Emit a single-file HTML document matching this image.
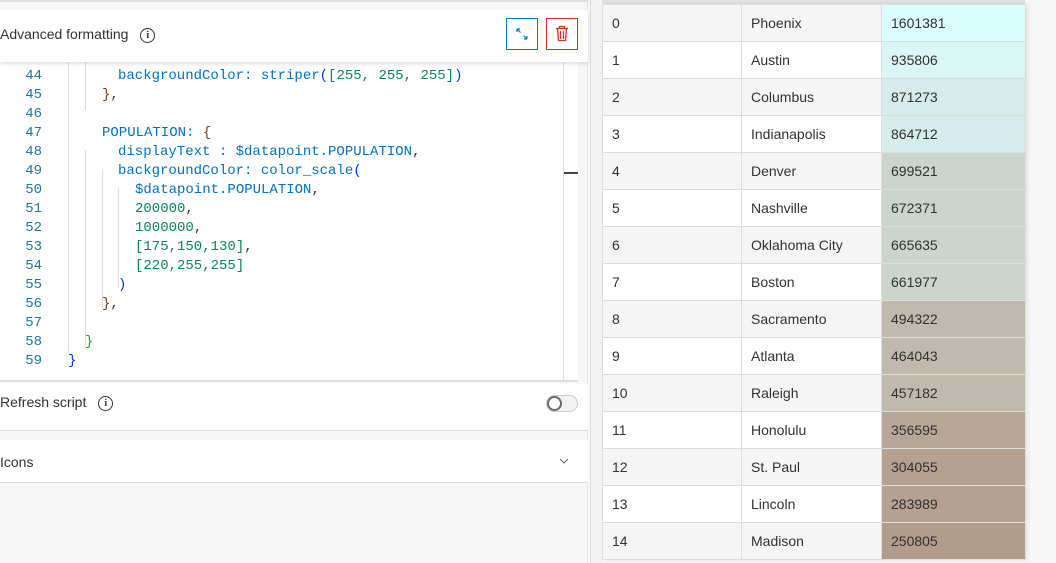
<!DOCTYPE html>
<html style="overflow:hidden;height:563px"><head><style>
*{margin:0;padding:0;box-sizing:border-box}
body{width:1056px;height:563px;overflow:hidden;background:#f7f7f7;font-family:"Liberation Sans",sans-serif;position:relative}
.left{position:absolute;left:0;top:0;width:588px;height:563px;background:#f7f7f7;border-right:1px solid #e6e6e6}
.hdr{position:absolute;left:0;top:10px;width:588px;height:52px;background:#fff;box-shadow:0 2px 4px rgba(0,0,0,.12);z-index:2}
.hdr .t{position:absolute;left:0;top:16px;font-size:14px;color:#323232}
.info{display:inline-block;width:15px;height:15px;border:1.3px solid #333;border-radius:50%;font-size:10px;text-align:center;line-height:13px;font-weight:bold;color:#333;vertical-align:middle;margin-left:8px;font-family:"Liberation Serif",serif}
.btn{position:absolute;top:8px;width:32px;height:32px;border:1px solid}
.code{position:absolute;left:0;top:62px;width:578px;height:320px;background:#fff;border-bottom:2px solid #ddd;overflow:hidden;font-family:"Liberation Mono",monospace;font-size:14px}
.ln{position:absolute;left:0;width:42px;text-align:right;color:#237893}
.cl{position:absolute;white-space:pre}
.g{position:absolute;width:1px;background:#ddd}
.row2{position:absolute;left:0;top:384px;width:588px;height:47px;background:#fff;border-bottom:1px solid #ddd}
.row3{position:absolute;left:0;top:440px;width:588px;height:43px;background:#fff;border-bottom:1px solid #ddd}
table{position:absolute;left:602px;top:4px;border-collapse:collapse;font-size:14px;color:#323232;box-shadow:2px 0 4px rgba(0,0,0,.08);table-layout:fixed;width:423px}
td{height:37px;border:1px solid #ddd;padding-left:9px}
tr:nth-child(odd) td{background:#f5f5f5}
tr:nth-child(even) td{background:#fff}
</style></head><body>
<div class="left">
<div style="position:absolute;left:0;top:0;width:588px;height:2px;background:#e0e0e0"></div>
<div class="hdr"><div class="t">Advanced formatting <span class="info">i</span></div>
<div class="btn" style="left:506px;border-color:#007ac2"><svg width="30" height="30" viewBox="0 0 30 30"><path d="M10 10l3.5 3.5M10 10h3M10 10v3M20 20l-3.5-3.5M20 20h-3M20 20v-3" stroke="#007ac2" stroke-width="1.2" fill="none"/></svg></div>
<div class="btn" style="left:546px;border-color:#d83020"><svg width="30" height="30" viewBox="0 0 30 30"><path d="M9 9.5h12M12.5 9.5v-2h5v2M10.5 9.5l1 12h7l1-12M13.5 12v8M16.5 12v8" stroke="#d83020" stroke-width="1.3" fill="none"/></svg></div>
</div>
<div class="code">
<div class="g" style="left:68px;top:0;height:290px"></div>
<div class="g" style="left:85px;top:0;height:48px"></div>
<div class="g" style="left:85px;top:88px;height:200px"></div>
<div class="g" style="left:102px;top:107px;height:140px"></div>
<div class="g" style="left:118px;top:126px;height:100px"></div>
<div class="g" style="left:563px;top:0;height:320px"></div>
<div style="position:absolute;left:564px;top:110px;width:14px;height:2px;background:#444"></div>
<div class="ln" style="top:6px">44</div><div class="cl" style="left:118px;top:6px;color:#0070c1">backgroundColor: <span>striper</span><span style="color:#0431fa">(</span><span style="color:#098658">[255, 255, 255]</span><span style="color:#0431fa">)</span></div>
<div class="ln" style="top:25px">45</div><div class="cl" style="left:102px;top:25px"><span style="color:#7b3814">}</span><span style="color:#333">,</span></div>
<div class="ln" style="top:44px">46</div>
<div class="ln" style="top:63px">47</div><div class="cl" style="left:102px;top:63px;color:#0070c1">POPULATION: <span style="color:#7b3814">{</span></div>
<div class="ln" style="top:82px">48</div><div class="cl" style="left:118px;top:82px;color:#0070c1">displayText : $datapoint.POPULATION<span style="color:#333">,</span></div>
<div class="ln" style="top:101px">49</div><div class="cl" style="left:118px;top:101px;color:#0070c1">backgroundColor: color_scale<span style="color:#0431fa">(</span></div>
<div class="ln" style="top:120px">50</div><div class="cl" style="left:135px;top:120px;color:#0070c1">$datapoint.POPULATION<span style="color:#333">,</span></div>
<div class="ln" style="top:139px">51</div><div class="cl" style="left:135px;top:139px;color:#098658">200000<span style="color:#333">,</span></div>
<div class="ln" style="top:158px">52</div><div class="cl" style="left:135px;top:158px;color:#098658">1000000<span style="color:#333">,</span></div>
<div class="ln" style="top:177px">53</div><div class="cl" style="left:135px;top:177px;color:#098658">[175,150,130]<span style="color:#333">,</span></div>
<div class="ln" style="top:196px">54</div><div class="cl" style="left:135px;top:196px;color:#098658">[220,255,255]</div>
<div class="ln" style="top:215px">55</div><div class="cl" style="left:118px;top:215px;color:#0431fa">)</div>
<div class="ln" style="top:234px">56</div><div class="cl" style="left:102px;top:234px;color:#7b3814">}<span style="color:#333">,</span></div>
<div class="ln" style="top:253px">57</div>
<div class="ln" style="top:272px">58</div><div class="cl" style="left:85px;top:272px;color:#319331">}</div>
<div class="ln" style="top:291px">59</div><div class="cl" style="left:68px;top:291px;color:#0431fa">}</div>
</div>
<div class="row2"><div style="position:absolute;left:0;top:10px;font-size:14px;color:#323232">Refresh script <span class="info">i</span></div>
<div style="position:absolute;left:546px;top:11px;width:32px;height:17px;border:1px solid #ccc;border-radius:9px;background:#f3f3f3"><div style="position:absolute;left:0;top:0;width:15px;height:15px;border:2px solid #6a6a6a;border-radius:50%;background:#fff"></div></div></div>
<div class="row3"><div style="position:absolute;left:0;top:14px;font-size:14px;color:#323232">Icons</div>
<svg style="position:absolute;left:558px;top:17px" width="12" height="8"><path d="M2 2l4 4 4-4" stroke="#666" fill="none"/></svg></div>
</div>
<div style="position:absolute;left:590px;top:0;width:12px;height:563px;background:#f3f3f3;border-left:1px solid #ddd"></div>
<div style="position:absolute;left:1025px;top:0;width:31px;height:563px;background:#f7f7f7"></div>
<div style="position:absolute;left:602px;top:0;width:423px;height:5px;background:#e0e0e0"></div>
<table>
<colgroup><col style="width:139px"><col style="width:140px"><col style="width:144px"></colgroup>
<tr><td>0</td><td>Phoenix</td><td style="background:rgb(220,255,255)">1601381</td></tr>
<tr><td>1</td><td>Austin</td><td style="background:rgb(216,246,244)">935806</td></tr>
<tr><td>2</td><td>Columbus</td><td style="background:rgb(212,236,234)">871273</td></tr>
<tr><td>3</td><td>Indianapolis</td><td style="background:rgb(212,236,234)">864712</td></tr>
<tr><td>4</td><td>Denver</td><td style="background:rgb(203,213,206)">699521</td></tr>
<tr><td>5</td><td>Nashville</td><td style="background:rgb(203,213,206)">672371</td></tr>
<tr><td>6</td><td>Oklahoma City</td><td style="background:rgb(203,213,206)">665635</td></tr>
<tr><td>7</td><td>Boston</td><td style="background:rgb(203,213,206)">661977</td></tr>
<tr><td>8</td><td>Sacramento</td><td style="background:rgb(192,186,172)">494322</td></tr>
<tr><td>9</td><td>Atlanta</td><td style="background:rgb(192,186,172)">464043</td></tr>
<tr><td>10</td><td>Raleigh</td><td style="background:rgb(192,186,172)">457182</td></tr>
<tr><td>11</td><td>Honolulu</td><td style="background:rgb(183,167,151)">356595</td></tr>
<tr><td>12</td><td>St. Paul</td><td style="background:rgb(180,161,143)">304055</td></tr>
<tr><td>13</td><td>Lincoln</td><td style="background:rgb(180,161,143)">283989</td></tr>
<tr><td>14</td><td>Madison</td><td style="background:rgb(178,157,138)">250805</td></tr>
</table>
</body></html>
